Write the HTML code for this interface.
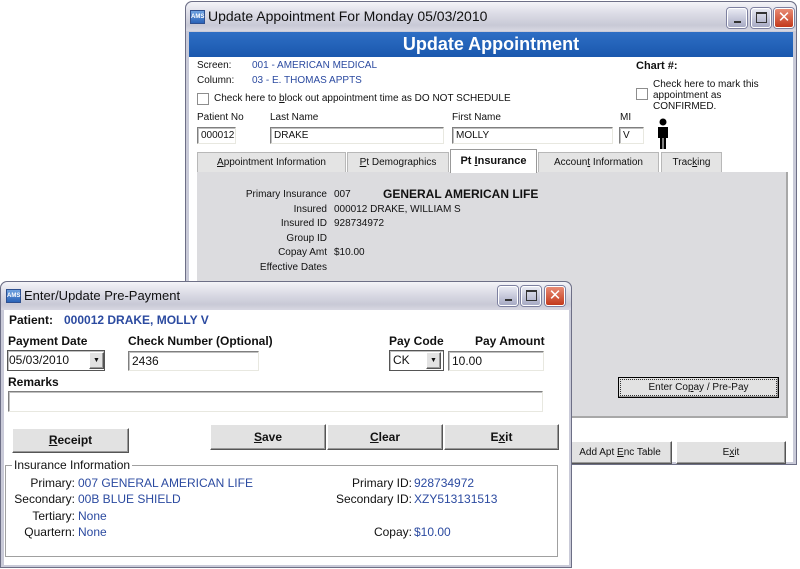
<!DOCTYPE html>
<html><head><style>
*{margin:0;padding:0;box-sizing:border-box}
body{width:800px;height:569px;background:#fff;position:relative;overflow:hidden;font-family:"Liberation Sans",sans-serif;font-size:10px;color:#111}
.a{position:absolute}
.win{position:absolute;background:#c9cad8;border:1px solid #6d6f86;border-radius:7px 7px 0 0}
.tb{position:absolute;left:0;right:0;top:0;background:linear-gradient(#f4f4f8,#dcdce6 40%,#c8c9d6 80%,#d8d8e2);border-radius:7px 7px 0 0}
.ico{position:absolute;width:15px;height:14px;background:linear-gradient(#6fa2e0,#2a63b8);border:1px solid #2d4f8f;color:#fff;font-size:6px;font-weight:bold;line-height:12px;text-align:center}
.wb{position:absolute;width:20px;height:20px;border:1px solid #fff;border-radius:3px;background:linear-gradient(#e8e9f2,#a7aac4);box-shadow:0 0 0 1px #7d80a0}
.wb.x{background:linear-gradient(#e88b74,#c3391c)}
.inp{position:absolute;background:#fff;border:1px solid #7f7f7f;border-right-color:#e8e8e0;border-bottom-color:#e8e8e0;box-shadow:inset 1px 1px 0 #c0c0c0;padding-left:3px}
.btn{position:absolute;background:#e2e2e2;border:1px solid #fff;border-right-color:#555;border-bottom-color:#555;box-shadow:inset -1px -1px 0 #999;text-align:center}
.blue{color:#2b4aa0}
.cb{position:absolute;width:12px;height:12px;border:1px solid #8d8d8d;background:#fff}
.n{font-family:"Liberation Sans Narrow","Liberation Sans",sans-serif;font-weight:bold;font-size:12px}
.tab{position:absolute;top:152px;height:20px;background:#e4e4e4;border:1px solid #b8b8b8;border-bottom:none;text-align:center;line-height:19px;font-size:10px}
.r{text-align:right}
</style></head><body>

<!-- back window -->
<div class="win" style="left:185px;top:1px;width:612px;height:464px">
 <div class="tb" style="height:29px"></div>
 <div class="ico" style="left:4px;top:8px">AMS</div>
 <div class="a" style="left:22px;top:6px;font-size:14px;color:#111">Update Appointment For Monday 05/03/2010</div>
 <div class="wb" style="left:541px;top:6px"><div class="a" style="left:6px;top:12px;width:7px;height:2px;background:#333"></div></div>
 <div class="wb" style="left:565px;top:6px"><div class="a" style="left:4px;top:3px;width:11px;height:11px;border:1px solid #333;border-top-width:2px"></div></div>
 <div class="wb x" style="left:588px;top:6px;color:#fff;font-size:15px;line-height:17px;text-align:center">✕</div>
 <div class="a" style="left:3px;top:30px;width:604px;height:430px;background:#fff"></div>
 <div class="a" style="left:3px;top:30px;width:604px;height:25px;background:linear-gradient(#2e6ec4,#1a58ae);color:#fff;font-weight:bold;font-size:18px;text-align:center;line-height:25px">Update Appointment</div>
</div>
<div class="a" style="left:197px;top:60px">Screen:</div>
<div class="a blue" style="left:252px;top:60px">001 - AMERICAN MEDICAL</div>
<div class="a" style="left:197px;top:75px">Column:</div>
<div class="a blue" style="left:252px;top:75px">03 - E. THOMAS APPTS</div>
<div class="cb" style="left:197px;top:93px"></div>
<div class="a" style="left:214px;top:93px">Check here to <u>b</u>lock out appointment time as DO NOT SCHEDULE</div>
<div class="a" style="left:636px;top:60px;font-weight:bold;font-size:11px">Chart #:</div>
<div class="cb" style="left:636px;top:88px"></div>
<div class="a" style="left:653px;top:79px;line-height:11px">Check here to mark this<br>appointment as<br>CONFIRMED.</div>
<div class="a" style="left:197px;top:112px">Patient No</div>
<div class="a" style="left:270px;top:112px">Last Name</div>
<div class="a" style="left:452px;top:112px">First Name</div>
<div class="a" style="left:620px;top:112px">MI</div>
<div class="inp" style="left:197px;top:127px;width:39px;height:17px;line-height:15px">000012</div>
<div class="inp" style="left:270px;top:127px;width:174px;height:17px;line-height:15px">DRAKE</div>
<div class="inp" style="left:452px;top:127px;width:161px;height:17px;line-height:15px">MOLLY</div>
<div class="inp" style="left:619px;top:127px;width:25px;height:17px;line-height:15px">V</div>
<svg class="a" style="left:654px;top:118px" width="18" height="31"><circle cx="9" cy="4" r="3.5"/><path d="M4 9h10v11h-2v11h-2.5v-11h-1v11h-2.5v-11h-2z"/></svg>
<div class="tab" style="left:197px;width:149px"><u>A</u>ppointment Information</div>
<div class="tab" style="left:347px;width:102px"><u>P</u>t Demographics</div>
<div class="tab" style="left:538px;width:121px">Accoun<u>t</u> Information</div>
<div class="tab" style="left:661px;width:61px">Trac<u>k</u>ing</div>
<div class="a" style="left:197px;top:172px;width:591px;height:246px;background:#dcdcdf;border-right:2px solid #a8a8a8;border-bottom:2px solid #a8a8a8"></div>
<div class="tab" style="left:450px;top:149px;width:87px;height:24px;background:#fff;font-weight:bold;font-size:11px;line-height:22px;border-color:#999">Pt <u>I</u>nsurance</div>
<div class="a r" style="left:200px;width:127px;top:188px;line-height:14.6px">Primary Insurance<br>Insured<br>Insured ID<br>Group ID<br>Copay Amt<br>Effective Dates</div>
<div class="a" style="left:334px;top:188px;line-height:14.6px">007<br>000012 DRAKE, WILLIAM S<br>928734972<br><br>$10.00</div>
<div class="a" style="left:383px;top:187px;font-weight:bold;font-size:12px">GENERAL AMERICAN LIFE</div>
<div class="btn" style="left:618px;top:377px;width:161px;height:21px;border:1px solid #000;line-height:18px"><div style="border:1px dotted #333;margin:1px;height:17px;line-height:15px">Enter Co<u>p</u>ay / Pre-Pay</div></div>
<div class="btn" style="left:560px;top:441px;width:112px;height:23px;line-height:21px;padding-left:8px">Add Apt <u>E</u>nc Table</div>
<div class="btn" style="left:676px;top:441px;width:110px;height:23px;line-height:21px">E<u>x</u>it</div>

<!-- front window -->
<div class="win" style="left:0;top:281px;width:572px;height:287px">
 <div class="tb" style="height:28px"></div>
 <div class="ico" style="left:5px;top:7px">AMS</div>
 <div class="a" style="left:23px;top:6px;font-size:13px">Enter/Update Pre-Payment</div>
 <div class="wb" style="left:497px;top:4px"><div class="a" style="left:6px;top:12px;width:7px;height:2px;background:#333"></div></div>
 <div class="wb" style="left:520px;top:4px"><div class="a" style="left:4px;top:3px;width:11px;height:11px;border:1px solid #333;border-top-width:2px"></div></div>
 <div class="wb x" style="left:544px;top:4px;color:#fff;font-size:15px;line-height:17px;text-align:center">✕</div>
 <div class="a" style="left:3px;top:28px;width:565px;height:255px;background:#fff"></div>
</div>
<div class="a n" style="left:9px;top:313px">Patient:</div>
<div class="a n blue" style="left:64px;top:313px">000012 DRAKE, MOLLY V</div>
<div class="a n" style="left:8px;top:334px">Payment Date</div>
<div class="a n" style="left:128px;top:334px">Check Number (Optional)</div>
<div class="a n" style="left:389px;top:334px">Pay Code</div>
<div class="a n" style="left:475px;top:334px">Pay Amount</div>
<div class="inp n" style="left:7px;top:350px;width:98px;height:21px;line-height:19px;font-weight:normal;padding-left:1px;border-color:#555">05/03/2010<div class="btn" style="left:81px;top:1px;width:15px;height:17px;font-size:7px;line-height:15px">▼</div></div>
<div class="inp n" style="left:128px;top:351px;width:131px;height:20px;line-height:18px;font-weight:normal">2436</div>
<div class="inp n" style="left:389px;top:350px;width:55px;height:21px;line-height:19px;font-weight:normal;border-color:#555">CK<div class="btn" style="left:36px;top:1px;width:15px;height:17px;font-size:7px;line-height:15px">▼</div></div>
<div class="inp n" style="left:448px;top:351px;width:96px;height:20px;line-height:18px;font-weight:normal">10.00</div>
<div class="a n" style="left:8px;top:375px">Remarks</div>
<div class="inp" style="left:8px;top:391px;width:535px;height:21px"></div>
<div class="btn n" style="left:12px;top:428px;width:117px;height:25px;line-height:23px"><u>R</u>eceipt</div>
<div class="btn n" style="left:210px;top:424px;width:116px;height:26px;line-height:24px"><u>S</u>ave</div>
<div class="btn n" style="left:327px;top:424px;width:116px;height:26px;line-height:24px"><u>C</u>lear</div>
<div class="btn n" style="left:444px;top:424px;width:115px;height:26px;line-height:24px">E<u>x</u>it</div>
<div class="a" style="left:5px;top:465px;width:553px;height:92px;border:1px solid #a0a0a0"></div>
<div class="a n" style="left:12px;top:458px;background:#fff;padding:0 2px;font-weight:normal;color:#111">Insurance Information</div>
<div class="a n r" style="left:5px;width:70px;top:475px;line-height:16.3px;font-weight:normal">Primary:<br>Secondary:<br>Tertiary:<br>Quartern:</div>
<div class="a n blue" style="left:78px;top:475px;line-height:16.3px;font-weight:normal">007 GENERAL AMERICAN LIFE<br>00B BLUE SHIELD<br>None<br>None</div>
<div class="a n r" style="left:300px;width:112px;top:475px;line-height:16.3px;font-weight:normal">Primary ID:<br>Secondary ID:<br><br>Copay:</div>
<div class="a n blue" style="left:414px;top:475px;line-height:16.3px;font-weight:normal">928734972<br>XZY513131513<br><br>$10.00</div>
</body></html>
